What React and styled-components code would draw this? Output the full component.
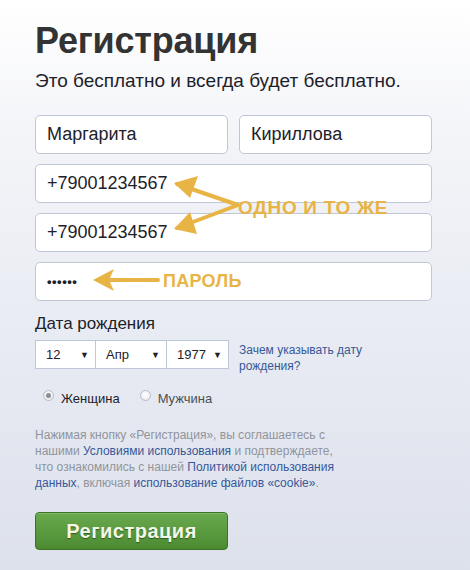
import React from "react";
import styled, { createGlobalStyle } from "styled-components";

const Global = createGlobalStyle`
  html, body { margin: 0; padding: 0; }
  body {
    width: 470px;
    height: 570px;
    overflow: hidden;
    font-family: "Liberation Sans", Arial, sans-serif;
    background: linear-gradient(180deg, #ffffff 0%, #f3f4f8 25%, #e9ecf3 55%, #dde1ec 100%);
  }
`;

const Page = styled.div`
  position: relative;
  width: 470px;
  height: 570px;
  box-sizing: border-box;
  padding: 21px 38px 0 35px;
`;

const Title = styled.h1`
  margin: 0;
  font-size: 36px;
  line-height: 40px;
  font-weight: bold;
  color: #333333;
  letter-spacing: -0.2px;
`;

const Subtitle = styled.div`
  margin-top: 9px;
  font-size: 19px;
  line-height: 22px;
  color: #1d2129;
`;

const Fields = styled.div`
  margin-top: 23px;
  display: flex;
  flex-direction: column;
  gap: 10px;
`;

const Row = styled.div`
  display: flex;
  gap: 11px;
`;

const Field = styled.div`
  flex: ${(p) => (p.$half ? "1 1 0" : "0 0 auto")};
  height: 39px;
  box-sizing: border-box;
  border: 1px solid #bdc7d8;
  border-radius: 5px;
  background: #fff;
  display: flex;
  align-items: center;
  padding-left: 11px;
  font-size: ${(p) => (p.$pw ? "13px" : "18px")};
  letter-spacing: ${(p) => (p.$pw ? "0.5px" : "0")};
  color: #1d2129;
  font-weight: ${(p) => (p.$pw ? "bold" : "normal")};
`;

const SectionLabel = styled.div`
  margin-top: 13px;
  font-size: 17px;
  line-height: 20px;
  color: #1d2129;
`;

const DateRow = styled.div`
  margin-top: 6px;
  display: flex;
  align-items: flex-start;
`;

const Selects = styled.div`
  display: flex;
`;

const Select = styled.div`
  width: ${(p) => p.$w}px;
  height: 29px;
  box-sizing: border-box;
  border: 1px solid #bdc7d8;
  margin-left: ${(p) => (p.$first ? "0" : "-1px")};
  background: #fff;
  display: flex;
  align-items: center;
  justify-content: space-between;
  padding: 0 6px 0 10px;
  font-size: 13px;
  color: #1d2129;
`;

const Caret = styled.span`
  font-size: 9px;
  color: #1d2129;
`;

const WhyLink = styled.a`
  margin-left: 10px;
  margin-top: 2px;
  width: 150px;
  font-size: 12px;
  line-height: 16px;
  color: #365899;
  text-decoration: none;
`;

const Genders = styled.div`
  margin-top: 17px;
  padding-left: 8px;
  display: flex;
  align-items: center;
  gap: 20px;
`;

const Gender = styled.label`
  display: flex;
  align-items: center;
  gap: 7px;
  font-size: 13px;
  color: ${(p) => p.$c};
`;

const Radio = styled.span`
  width: 11px;
  height: 11px;
  box-sizing: border-box;
  border-radius: 50%;
  border: 1px solid #b8bcc4;
  background: radial-gradient(circle at 50% 40%, #ffffff 0%, #e4e6ea 100%);
  display: flex;
  align-items: center;
  justify-content: center;
  margin-top: -6px;
  &::after {
    content: "";
    width: 5px;
    height: 5px;
    border-radius: 50%;
    background: ${(p) => (p.$on ? "#8a8e96" : "transparent")};
  }
`;

const Terms = styled.p`
  margin: 21px 0 0;
  width: 310px;
  font-size: 12px;
  line-height: 16px;
  color: #90949c;
`;

const Link = styled.a`
  color: #365899;
  text-decoration: none;
`;

const Button = styled.button`
  margin-top: 21px;
  width: 193px;
  height: 38px;
  border: 1px solid #3c7324;
  border-radius: 4px;
  background: linear-gradient(180deg, #6aa84e 0%, #5b9b40 50%, #4c8a32 100%);
  box-shadow: inset 0 1px 0 #86bb6c;
  color: #f4f6e8;
  font-family: "Liberation Sans", Arial, sans-serif;
  font-size: 20px;
  font-weight: bold;
  letter-spacing: 0.5px;
  text-shadow: 0 1px 1px #2f5a1c;
  padding: 0;
`;

const Overlay = styled.svg`
  position: absolute;
  left: 0;
  top: 0;
  pointer-events: none;
`;

const Note = styled.text`
  font-family: "Liberation Sans", Arial, sans-serif;
  font-weight: bold;
  font-size: ${(p) => p.$size}px;
  letter-spacing: ${(p) => p.$ls}px;
  fill: #e8b445;
`;

export default function App() {
  const gold = "#e8b445";
  return (
    <>
      <Global />
      <Page>
        <Title>Регистрация</Title>
        <Subtitle>Это бесплатно и всегда будет бесплатно.</Subtitle>
        <Fields>
          <Row>
            <Field $half>Маргарита</Field>
            <Field $half>Кириллова</Field>
          </Row>
          <Field>+79001234567</Field>
          <Field>+79001234567</Field>
          <Field $pw>••••••</Field>
        </Fields>
        <SectionLabel>Дата рождения</SectionLabel>
        <DateRow>
          <Selects>
            <Select $w={61} $first>
              12 <Caret>▼</Caret>
            </Select>
            <Select $w={72}>
              Апр <Caret>▼</Caret>
            </Select>
            <Select $w={63}>
              1977 <Caret>▼</Caret>
            </Select>
          </Selects>
          <WhyLink href="#">Зачем указывать дату рождения?</WhyLink>
        </DateRow>
        <Genders>
          <Gender $c="#1d2129">
            <Radio $on />
            Женщина
          </Gender>
          <Gender $c="#4b4f56">
            <Radio />
            Мужчина
          </Gender>
        </Genders>
        <Terms>
          Нажимая кнопку «Регистрация», вы соглашаетесь с нашими{" "}
          <Link href="#">Условиями использования</Link> и подтверждаете, что
          ознакомились с нашей <Link href="#">Политикой использования данных</Link>,
          включая <Link href="#">использование файлов «cookie»</Link>.
        </Terms>
        <Button>Регистрация</Button>

        <Overlay width="470" height="570" viewBox="0 0 470 570">
          <g
            stroke={gold}
            strokeWidth="4"
            fill="none"
            strokeLinecap="round"
            strokeLinejoin="round"
          >
            <polyline points="177,184 238,205 177,228" />
            <line x1="98" y1="280" x2="158" y2="280" />
          </g>
          <g fill={gold}>
            <polygon points="174,183 198,176 190,198" />
            <polygon points="174,229 190,212 197,234" />
            <polygon points="93,280 114,269 109,280 114,291" />
          </g>
          <Note x="238" y="214" $size={19} $ls={0.7}>ОДНО И ТО ЖЕ</Note>
          <Note x="163" y="287" $size={18} $ls={0.3}>ПАРОЛЬ</Note>
        </Overlay>
      </Page>
    </>
  );
}
